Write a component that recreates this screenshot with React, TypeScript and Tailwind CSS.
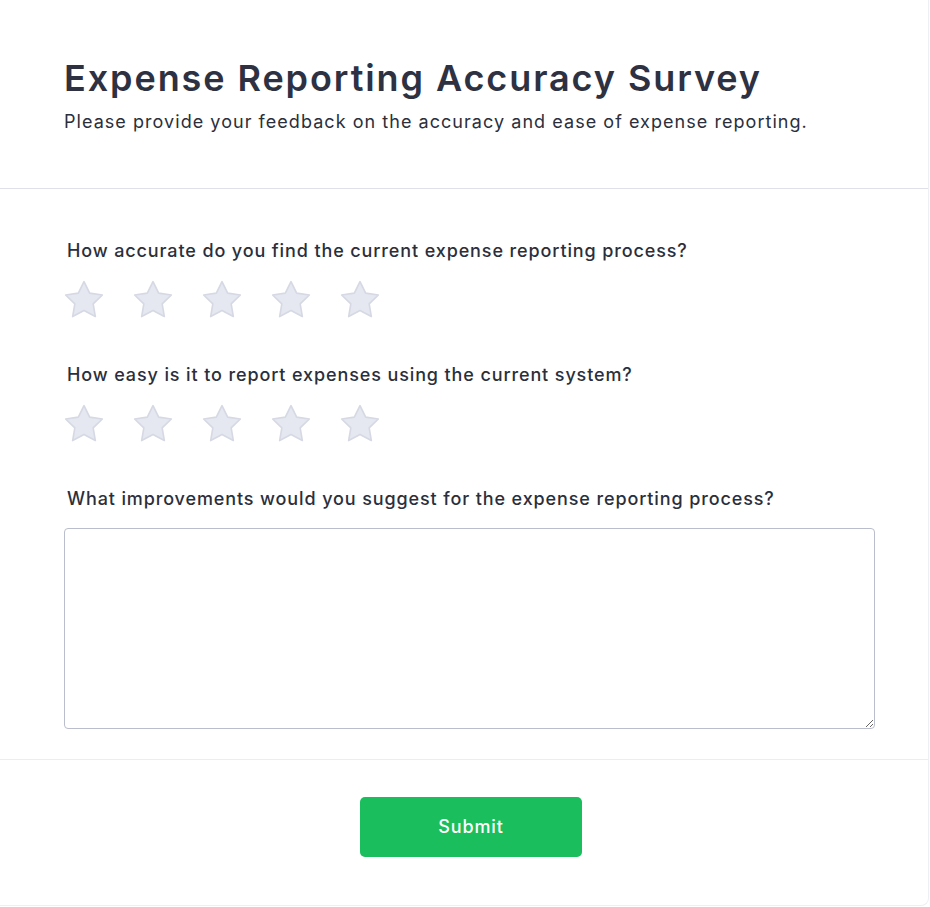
import React from "react";

function Star() {
  return (
    <svg width="44" height="44" viewBox="0 0 24 24" className="shrink-0">
      <path
        d="M12 2l3.09 6.26L22 9.27l-5 4.87 1.18 6.88L12 17.77l-6.18 3.25L7 14.14 2 9.27l6.91-1.01L12 2z"
        fill="#e5e8f0"
        stroke="#d6d9e3"
        strokeWidth="0.9"
        strokeLinejoin="round"
      />
    </svg>
  );
}

function Stars() {
  return (
    <div className="flex gap-[25px] ml-[-2px] mt-[13px]">
      <Star />
      <Star />
      <Star />
      <Star />
      <Star />
    </div>
  );
}

export default function App() {
  return (
    <div
      className="w-[929px] bg-white rounded-br-lg border-r border-b border-[#eeeff3] text-[#2b2f3c] tracking-[0.055em]"
      style={{ fontFamily: "Inter, 'Noto Sans', sans-serif" }}
    >
      <div className="px-16 pt-[58px] pb-[52px] border-b border-[#dfe1ea]">
        <h1 className="text-4xl font-semibold leading-10 text-[#2d3142] tracking-[0.053em]">
          Expense Reporting Accuracy Survey
        </h1>
        <p className="mt-[10px] text-lg leading-7 font-normal text-[#2b2f3c] tracking-[0.058em]">
          Please provide your feedback on the accuracy and ease of expense reporting.
        </p>
      </div>
      <div className="px-16 pt-[48px] pb-[30px] border-b border-[#ececf2]">
        <div className="pl-[3px] text-lg leading-7 font-medium">
          How accurate do you find the current expense reporting process?
        </div>
        <Stars />
        <div className="pl-[3px] mt-[39px] text-lg leading-7 font-medium">
          How easy is it to report expenses using the current system?
        </div>
        <Stars />
        <div className="pl-[3px] mt-[39px] text-lg leading-7 font-medium">
          What improvements would you suggest for the expense reporting process?
        </div>
        <textarea className="mt-[15px] block w-[811px] h-[201px] border border-[#b9bdcc] rounded-[4px] outline-none p-2 text-base" />
      </div>
      <div className="flex justify-center pl-[14px] pt-[37px] pb-[48px]">
        <button className="w-[222px] h-[60px] rounded-[5px] bg-[#1abe5d] text-white text-lg font-medium tracking-[0.05em]">
          Submit
        </button>
      </div>
    </div>
  );
}
